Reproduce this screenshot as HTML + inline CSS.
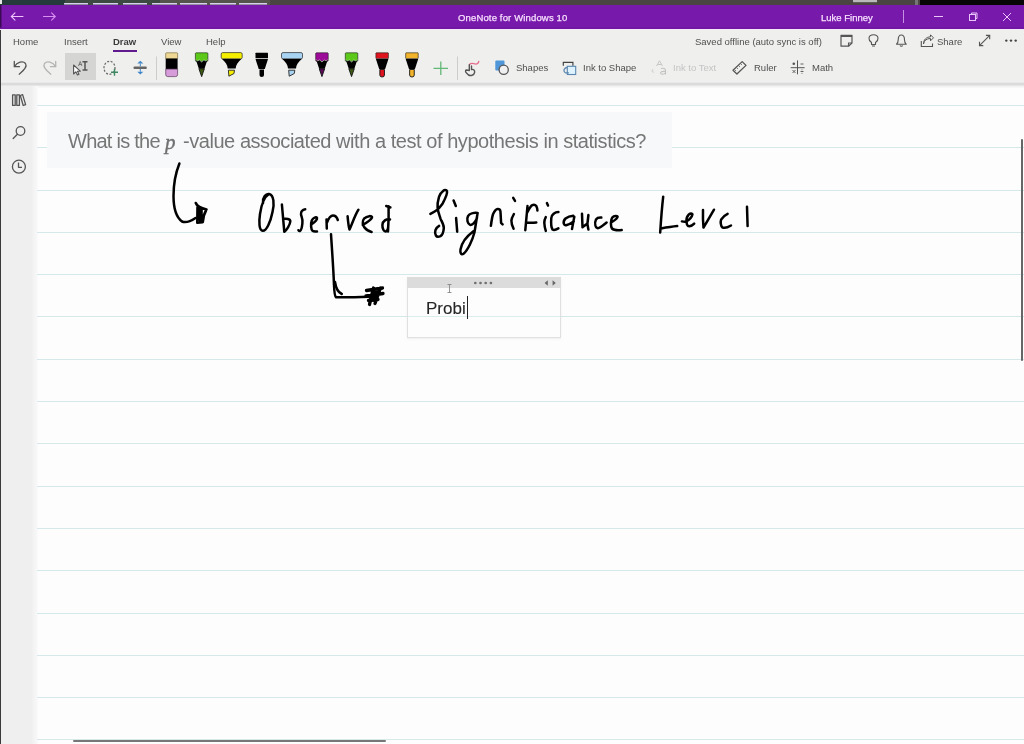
<!DOCTYPE html>
<html><head><meta charset="utf-8">
<style>
*{margin:0;padding:0;box-sizing:border-box}
html,body{width:1024px;height:744px;overflow:hidden;background:#fdfdfd;font-family:"Liberation Sans",sans-serif}
.abs{position:absolute}
#top{left:0;top:0;width:1024px;height:5px;background:#3e4442}
#title{left:0;top:5px;width:1024px;height:24px;background:#7719aa}
#ribbon{left:0;top:29px;width:1024px;height:52px;background:#efefee}
#shadow{left:0;top:81px;width:1024px;height:7px;background:linear-gradient(#f2f2f2 0px,#e9e9e9 1.5px,#dadada 2.5px,#dbdbdb 3.5px,#e6e6e6 4.5px,#f2f2f2 5.5px,#fafafa 7px)}
#side{left:0;top:86px;width:38px;height:658px;background:linear-gradient(90deg,#efefef 32px,#f3f3f3 33px,#f6f6f6 36px,#fbfbfb 38px)}
#leftedge{left:0;top:29px;width:1px;height:715px;background:#3a3a3a}
.t{position:absolute;white-space:nowrap;line-height:1;will-change:transform}
.rl{position:absolute;left:37px;width:987px;height:1px;background:#d5e9ea}
</style></head><body>
<div id="top" class="abs"></div>
<div id="title" class="abs"></div>
<div id="ribbon" class="abs"></div>
<div id="shadow" class="abs"></div>
<div id="side" class="abs"></div>
<div id="leftedge" class="abs"></div>


<svg class="abs" style="left:0;top:0" width="1024" height="90" viewBox="0 0 1024 90">
<!-- top strip details -->
<rect x="0" y="0" width="65" height="5" fill="#253a3a"/>
<rect x="65" y="0" width="95" height="5" fill="#3c4a42"/>
<rect x="160" y="0" width="110" height="5" fill="#55544c"/>
<rect x="270" y="0" width="650" height="5" fill="#4a4542"/>
<rect x="920" y="0" width="104" height="5" fill="#060606"/>
<rect x="0" y="0" width="2" height="4" fill="#e8e8e8"/>
<rect x="853" y="0" width="24" height="2.2" fill="#cfcfcf" opacity="0.85"/><rect x="915" y="0" width="3" height="5" fill="#777"/>
<g fill="#d8d0f0"><rect x="64" y="3" width="24" height="1.5"/><rect x="93" y="3" width="25" height="1.5"/><rect x="123" y="3" width="24" height="1.5"/><rect x="152" y="3" width="25" height="1.5"/><rect x="180" y="3" width="27" height="1.5"/><rect x="210" y="3" width="26" height="1.5"/><rect x="239" y="3" width="28" height="1.5"/></g>
<rect x="0" y="5" width="1.5" height="24" fill="#3a0a55"/><rect x="0" y="27.5" width="1024" height="1.5" fill="#6e17a0"/>
<!-- back/forward -->
<g fill="none" stroke="#f0c4ff" stroke-width="1.1" stroke-linecap="round">
<path d="M11.5 16.5H23M15 12.8L11.3 16.5L15 20.2"/>
</g>
<g fill="none" stroke="#d890f2" stroke-width="1.1" stroke-linecap="round">
<path d="M43.5 16.5H55.3M51.6 12.8L55.3 16.5L51.6 20.2"/>
</g>
<rect x="903" y="10" width="1" height="13" fill="#c590e0"/>
<g fill="none" stroke="#eac4fa" stroke-width="1">
<path d="M934 16.5H943"/>
<rect x="969.5" y="14.5" width="6" height="6"/>
<path d="M971.5 14.5V13H977V18.5H975.5"/>
<path d="M1003 13L1011 21M1011 13L1003 21"/>
</g>
<rect x="0" y="29" width="1024" height="1" fill="#f6e8fb"/>
<!-- undo / redo -->
<g fill="none" stroke="#555" stroke-width="1.3" stroke-linecap="round" stroke-linejoin="round">
<path d="M14.5 66.5C17 62 23 60.5 25.5 63.5C27.5 66.5 24.5 70 19.2 74.2"/>
<path d="M14.3 61.5V66.7H19.5"/>
</g>
<g fill="none" stroke="#b4b4b4" stroke-width="1.3" stroke-linecap="round" stroke-linejoin="round">
<path d="M55.5 66.5C53 62 47 60.5 44.5 63.5C42.5 66.5 45.5 70 50.8 74.2"/>
<path d="M55.7 61.5V66.7H50.5"/>
</g>
<!-- lasso select selected -->
<rect x="65" y="53" width="31" height="27" fill="#d5d5d3"/>
<path d="M73.6 65V74L75.8 71.8L77.5 75L79 74.3L77.4 71.2L80.3 71.2Z" fill="#fff" stroke="#555" stroke-width="1.1" stroke-linejoin="round"/>
<path d="M78.5 66L80.2 61.5L82 66M79 64.5H81.5" fill="none" stroke="#666" stroke-width="0.8"/>
<path d="M82.5 61.8H87.5M85 61.8V70M82.5 70H87.5" fill="none" stroke="#555" stroke-width="1.5"/>
<!-- lasso circle -->
<ellipse cx="109.5" cy="67.8" rx="5.5" ry="6.5" fill="none" stroke="#666" stroke-width="1.2" stroke-dasharray="2 1.6"/>
<path d="M111 72.3H118M114.5 68.8V75.8" stroke="#3f8a60" stroke-width="1.4"/>
<!-- space tool -->
<rect x="133.5" y="66.4" width="13.3" height="2.6" rx="1" fill="#666"/>
<path d="M140.3 60.8L137.3 63.6H143.3Z M140.3 74.6L137.3 71.7H143.3Z" fill="#3f86c8"/>
<path d="M140.3 63.5V66.4M140.3 69V71.8" stroke="#3f86c8" stroke-width="1"/>
<rect x="156" y="56.5" width="1" height="23.5" fill="#cdcdcd"/>
<!-- plus and sep -->
<path d="M433.5 68.3H448M440.8 61.5V75" stroke="#62b876" stroke-width="1.3"/>
<rect x="457" y="56.5" width="1" height="23.5" fill="#cdcdcd"/>
<!-- ink replay -->
<path d="M469.5 64.5C471 62.5 474 63.5 475.5 64C477 64.3 478.5 63 478.8 61.5" fill="none" stroke="#e86c8c" stroke-width="1.3" stroke-linecap="round"/>
<path d="M469.3 64.8V70.5L466.3 70C465 70.5 465.5 72 466.5 73L468.5 75C470.5 76 474 75.5 474.6 72.5C475 70.5 473.5 69 471.5 69.5V66" fill="none" stroke="#555" stroke-width="1.4" stroke-linejoin="round" stroke-linecap="round"/>
<!-- shapes -->
<rect x="495.3" y="60.6" width="9.2" height="10" rx="1" fill="#4f97d8"/>
<circle cx="503.7" cy="69.8" r="4.6" fill="#f0f0f0" stroke="#555" stroke-width="1.3"/>
<!-- ink to shape -->
<path d="M563.3 65.8V62.3H572.9V65.8" fill="none" stroke="#444" stroke-width="1.2"/>
<rect x="567.3" y="66.3" width="8.4" height="8.2" fill="#dff3ff" stroke="#5a86b0" stroke-width="1.1"/>
<path d="M567 67.5C564.5 68 562.5 70.5 565 72.5C566.5 73.5 568 72.5 569 73" fill="none" stroke="#5a86b0" stroke-width="1.3"/>
<!-- ink to text disabled -->
<path d="M656.5 66L659.5 60.8L662.5 66M657.5 64.5H661.5" fill="none" stroke="#c6c6c6" stroke-width="1"/>
<path d="M653 69C651.5 70.5 652 73 654 72" fill="none" stroke="#cdcdcd" stroke-width="1"/>
<path d="M661 68.5C665 67.5 665.5 69.5 665.5 71V74.5M665.3 71.5C662 71 660 72 660.8 73.5C661.5 74.5 664 74.5 665.3 73" fill="none" stroke="#c2c2c2" stroke-width="1.1"/>
<!-- ruler -->
<path d="M742.2 61.6L746 65.4L736.9 74L733 70.3Z" fill="none" stroke="#555" stroke-width="1.3" stroke-linejoin="round"/>
<path d="M740.5 63.5L742 65M738.5 65.5L740 67M736.5 67.5L738 69M734.5 69.5L736 71" stroke="#666" stroke-width="0.8"/>
<!-- math -->
<path d="M797.5 60.4V74.3M790.7 67.7H804.6" stroke="#555" stroke-width="1"/>
<circle cx="793.8" cy="63.8" r="1.3" fill="#555"/>
<path d="M800.5 64H803.5M792.5 70L795.5 73M795.5 70L792.5 73M800.5 71.5H803.5" stroke="#555" stroke-width="0.9"/>
<circle cx="802" cy="69.8" r="0.5" fill="#555"/><circle cx="802" cy="73.3" r="0.5" fill="#555"/>
<!-- row2 right icons -->
<path d="M841 35.3H852V43L848.5 46.2H841Z" fill="none" stroke="#555" stroke-width="1.2" stroke-linejoin="round"/>
<path d="M841 36H852" stroke="#555" stroke-width="2"/>
<path d="M852 43H848.5V46.2" fill="none" stroke="#555" stroke-width="1.1"/>
<path d="M871.5 42.5C869.5 41 868.8 39.5 869 38C869.3 35.8 871.2 34.8 873.5 34.8C875.8 34.8 877.7 35.8 878 38C878.2 39.5 877.5 41 875.5 42.5V44.5H871.5Z M872 46H875" fill="none" stroke="#555" stroke-width="1.1" stroke-linejoin="round"/>
<path d="M896.5 44.2H906.2C905 43 904.5 42 904.5 40C904.5 36.5 903 35 901.3 35C899.6 35 898.2 36.5 898.2 40C898.2 42 897.7 43 896.5 44.2Z M900 45.5C900.5 46.5 902.2 46.5 902.7 45.5" fill="none" stroke="#555" stroke-width="1.1" stroke-linejoin="round"/>
<path d="M921.3 41V46.5H932.5V43.5" fill="none" stroke="#555" stroke-width="1.1"/>
<path d="M923.5 44C924 40.5 926.5 38.5 930.5 38.5V40.8L933.5 37.8L930.5 34.8V36.8C926 37 923.5 40 923.5 44Z" fill="none" stroke="#555" stroke-width="1" stroke-linejoin="round"/>
<path d="M979.5 45.6L989.7 35.4M979.5 41.8V45.6H983.3M985.9 35.4H989.7V39.2" fill="none" stroke="#555" stroke-width="1.1"/>
<g fill="#444"><circle cx="1006.3" cy="40.6" r="1.2"/><circle cx="1011" cy="40.6" r="1.2"/><circle cx="1015.7" cy="40.6" r="1.2"/></g>
</svg>

<!-- pens -->
<svg class="abs" style="left:0;top:0" width="1024" height="90" viewBox="0 0 1024 90"><path d="M165.7 53.5 Q165.7 52.8 166.39999999999998 52.8 H176.9 Q177.6 52.8 177.6 53.5 V58.6 H165.7 Z" fill="#efd893" stroke="#6a5a30" stroke-width="0.6"/><rect x="165.7" y="58.6" width="11.9" height="10.5" fill="#000"/><path d="M165.7 69.1 H177.6 V74.5 Q177.6 76.6 175.6 76.6 H167.7 Q165.7 76.6 165.7 74.5 Z" fill="#d69bd9" stroke="#5a3a5a" stroke-width="0.7"/><rect x="195.4" y="52.8" width="12.5" height="8.5" rx="0.8" fill="#5cc81a" stroke="#1a1a1a" stroke-width="0.6"/><path d="M195.70 59.30 L197.40 61.00 L199.40 59.90 L201.65 62.00 L203.90 59.90 L205.90 61.00 L207.60 59.30 L204.45 68.80 L198.85 68.80 Z" fill="#000"/><path d="M195.70 59.30 L197.40 61.00 L199.40 59.90 L201.65 62.00 L203.90 59.90 L205.90 61.00 L207.60 59.30" fill="none" stroke="#d8f0c8" stroke-width="0.7" opacity="0.8"/><path d="M198.95000000000002 68.8 L204.35 68.8 L201.65 76.6 Z" fill="#3d5a12" stroke="#111" stroke-width="0.9" stroke-linejoin="round"/><rect x="221.2" y="52.6" width="21" height="6.2" rx="1.5" fill="#f5ee00" stroke="#222" stroke-width="0.7"/><path d="M222.0 59 H241.39999999999998 C238.2 62 235.7 65 235.7 68.6 H227.7 C227.7 65 225.2 62 222.0 59 Z" fill="#000"/><path d="M228.39999999999998 70.2 H234.5 L234.0 73.5 L228.89999999999998 76.2 Z" fill="#f5ee00" stroke="#222" stroke-width="0.9" stroke-linejoin="round"/><rect x="255.5" y="52.8" width="12.5" height="5.4" rx="0.5" fill="#000"/><path d="M255.5 59 H268 L264.8 69 H258.7 Z" fill="#000"/><path d="M259.5 69.6 H264 V75 Q264 77 261.75 77 Q259.5 77 259.5 75 Z" fill="#000"/><rect x="281.5" y="52.6" width="21" height="6.2" rx="1.5" fill="#a9d3f3" stroke="#222" stroke-width="0.7"/><path d="M282.3 59 H301.7 C298.5 62 296.0 65 296.0 68.6 H288.0 C288.0 65 285.5 62 282.3 59 Z" fill="#000"/><path d="M288.7 70.2 H294.8 L294.3 73.5 L289.2 76.2 Z" fill="#a9d3f3" stroke="#222" stroke-width="0.9" stroke-linejoin="round"/><rect x="315.7" y="52.8" width="12.5" height="8.5" rx="0.8" fill="#9c0c98" stroke="#1a1a1a" stroke-width="0.6"/><path d="M316.00 59.30 L317.70 61.00 L319.70 59.90 L321.95 62.00 L324.20 59.90 L326.20 61.00 L327.90 59.30 L324.75 68.80 L319.15 68.80 Z" fill="#000"/><path d="M316.00 59.30 L317.70 61.00 L319.70 59.90 L321.95 62.00 L324.20 59.90 L326.20 61.00 L327.90 59.30" fill="none" stroke="#d8f0c8" stroke-width="0.7" opacity="0.8"/><path d="M319.25 68.8 L324.65 68.8 L321.95 76.6 Z" fill="#5a0a58" stroke="#111" stroke-width="0.9" stroke-linejoin="round"/><rect x="345.3" y="52.8" width="12.5" height="8.5" rx="0.8" fill="#5cc81a" stroke="#1a1a1a" stroke-width="0.6"/><path d="M345.60 59.30 L347.30 61.00 L349.30 59.90 L351.55 62.00 L353.80 59.90 L355.80 61.00 L357.50 59.30 L354.35 68.80 L348.75 68.80 Z" fill="#000"/><path d="M345.60 59.30 L347.30 61.00 L349.30 59.90 L351.55 62.00 L353.80 59.90 L355.80 61.00 L357.50 59.30" fill="none" stroke="#d8f0c8" stroke-width="0.7" opacity="0.8"/><path d="M348.85 68.8 L354.25 68.8 L351.55 76.6 Z" fill="#3d5a12" stroke="#111" stroke-width="0.9" stroke-linejoin="round"/><rect x="375.9" y="52.8" width="12.5" height="5.8" rx="0.5" fill="#e0141e" stroke="#1a1a1a" stroke-width="0.6"/><path d="M375.9 59 H388.4 L385.15 69 H379.15 Z" fill="#000"/><path d="M379.84999999999997 69.5 H384.45 V75 Q384.45 77 382.15 77 Q379.84999999999997 77 379.84999999999997 75 Z" fill="#e0141e" stroke="#111" stroke-width="0.9"/><rect x="405.7" y="52.8" width="12.5" height="5.8" rx="0.5" fill="#f2b42a" stroke="#1a1a1a" stroke-width="0.6"/><path d="M405.7 59 H418.2 L414.95 69 H408.95 Z" fill="#000"/><path d="M409.65 69.5 H414.25 V75 Q414.25 77 411.95 77 Q409.65 77 409.65 75 Z" fill="#f2b42a" stroke="#111" stroke-width="0.9"/></svg>
<!-- ruled lines -->
<div class="rl" style="top:105px"></div>
<div class="rl" style="top:147px"></div>
<div class="rl" style="top:190px"></div>
<div class="rl" style="top:232px"></div>
<div class="rl" style="top:274px"></div>
<div class="rl" style="top:316px"></div>
<div class="rl" style="top:359px"></div>
<div class="rl" style="top:401px"></div>
<div class="rl" style="top:443px"></div>
<div class="rl" style="top:486px"></div>
<div class="rl" style="top:528px"></div>
<div class="rl" style="top:570px"></div>
<div class="rl" style="top:613px"></div>
<div class="rl" style="top:655px"></div>
<div class="rl" style="top:697px"></div>
<div class="rl" style="top:739px"></div>

<!-- question box -->
<div class="abs" style="left:47px;top:112px;width:625px;height:56px;background:#f7f8fa"></div>
<div class="t" style="left:68px;top:131px;font-size:20px;color:#767676;letter-spacing:-0.75px">What is the</div>
<div class="t" style="left:165px;top:132px;font-size:21px;color:#707070;font-family:'Liberation Serif';font-style:italic;-webkit-text-stroke:0.4px #707070">p</div>
<div class="t" style="left:183px;top:131px;font-size:20px;color:#767676;letter-spacing:-0.45px">-value associated with a test of hypothesis in statistics?</div>


<!-- sidebar icons -->
<svg class="abs" style="left:0;top:86px" width="40" height="100" viewBox="0 86 40 100">
<g fill="none" stroke="#555" stroke-width="1.3" stroke-linejoin="round">
<rect x="12.6" y="94.8" width="2.6" height="10.6"/>
<rect x="16.8" y="94.8" width="2.6" height="10.6"/>
<path d="M20.3 95.5L22.6 94.6L25.6 104.6L23.2 105.5Z"/>
<circle cx="20.5" cy="131" r="4.3"/>
<path d="M17.4 134.2L13.2 138.5" stroke-linecap="round"/>
<circle cx="18.9" cy="166.7" r="6.5"/>
<path d="M18.5 162.5V167.3H22"/>
</g>
</svg>
<!-- scrollbars -->
<div class="abs" style="left:1021px;top:139px;width:2px;height:222px;background:#666;border-radius:1px"></div>
<div class="abs" style="left:73px;top:740px;width:313px;height:2px;background:#777;border-radius:1px"></div>
<!-- text box -->
<div class="abs" style="left:407px;top:277px;width:154px;height:61px;border:1px solid #e0e0e0;background:rgba(255,255,255,0.2);box-shadow:0 1px 2px rgba(0,0,0,0.06)"></div>
<div class="abs" style="left:407px;top:277px;width:154px;height:11px;background:#dcdcdc"></div>
<svg class="abs" style="left:400px;top:270px" width="170" height="60" viewBox="400 270 170 60">
<g fill="#707070"><circle cx="475.3" cy="283" r="1.35"/><circle cx="480.5" cy="283" r="1.35"/><circle cx="485.7" cy="283" r="1.35"/><circle cx="490.9" cy="283" r="1.35"/></g>
<path d="M547.8 280.2V285.8L544.6 283Z M552.6 280.2V285.8L555.8 283Z" fill="#666"/>
<path d="M447.5 284.5H451.5M449.5 284.5V292.5M447.5 292.5H451.5" stroke="#888" stroke-width="0.9"/>
</svg>
<div class="t" style="left:426px;top:300px;font-size:17px;color:#262626;-webkit-text-stroke:0.1px #262626">Probi</div>
<div class="abs" style="left:466.8px;top:296px;width:1.5px;height:23px;background:#222"></div>

<!-- handwriting -->
<svg class="abs" style="left:0;top:0" width="1024" height="744" viewBox="0 0 1024 744">
<g fill="none" stroke="#000" stroke-width="2.5" stroke-linecap="round" stroke-linejoin="round">
<!-- first arrow -->
<path d="M179.4 163.5C176 172 173.5 185 173.5 196C173.5 207 176 217 182 221.5C186.5 223.5 191 221 195.5 218"/>
<path d="M195.8 203C197 206.5 200 208 206.5 209.5M197.5 207.5L197.3 222.8L202.5 222.3M206 210.5C204.5 213 203.3 216 202.8 222M199.5 209L200 221M201.5 210L201.5 220" stroke-width="2.6"/>
<!-- Observed -->
<path d="M263 203C262.5 197 266 193.5 269 194C274 195 274.5 204 272.5 212C270.5 222 266.5 231 262.8 230.8C259 230.5 258.8 222 260 214C261.3 205 264 197 269 194"/>
<path d="M281.9 204.5L284.3 231.8M283 219C286 218.5 290.5 218.5 290.3 221.5C290 225 286.5 230 284.3 231.8"/>
<path d="M305.2 209.3C302.5 209.5 300.5 212 301 214.5C301.5 217 303 219 302.4 223C302 227 301.8 230 300 231C299 231.3 298.5 230.5 298.4 230.2"/>
<path d="M311.3 224.5C313.5 223 317.5 220 317 218C316.5 216.5 313 217.5 311.8 220.5C310.5 224 311 229 312.5 230.8C314 232 316 231.5 317 231.4"/>
<path d="M326.5 219.5L326.8 228.5M327 222.5C328.5 218.5 330.5 215.5 333 215.5C335.5 215.5 337 217.5 337.8 220"/>
<path d="M347.6 216.3C348 221 348.5 226 349.5 229.5C352 224 355.5 214 358.4 209.8"/>
<path d="M362.7 224.8C366 223 371 220 372 217.5C372.5 215.5 367 215.5 364 218.7C362 221 362.5 225 364.6 227.6C366.5 230 369.5 231.5 371.6 231.9"/>
<path d="M388.6 206.2C388.8 214 388.5 224 388 231.4M386.2 206L390.4 207.4M390 219.5C386.5 218.5 382.5 221 382.4 225C382.3 229 384 231.5 385.5 231.4C387 231.3 388 230 388.2 227"/>
<!-- L arrow -->
<path d="M331 234.2C332 250 333.5 270 334 285C334.3 292 334.8 296.5 336 297.3C345 297.5 355 297.3 368.5 296.8"/>
<path d="M335 282C336 289 338.5 292.5 341.8 294"/>
<path d="M366.5 290.5L382.5 288M366 296L383 293.5M373.5 288L369.5 304.5M380.5 288L375 303.5M368.5 300.5L378 299.5" stroke-width="3.3"/><path d="M371 291L380 290L377 301L370 302Z" fill="#000" stroke="none"/>
<!-- Significance -->
<path d="M430.4 213.9C433 212.5 435 211.5 436.9 210C439.5 208 441.5 205 442.7 203.4C445 199 447.5 193 447 191.1C446.5 189.5 444 190 443.4 190.7C441 192.5 439.5 195 439 196.9C437.8 201 437.3 204.5 437.6 207.8C438 212 439.5 215.5 440.5 218.7C442 222 444 225 443.8 228.1C443.5 232 442.5 235 440.5 236.1C438.5 237 436.5 236.5 435.9 235.5C435 233.5 435 231.5 435.4 230.3C436.5 227.5 438 226.5 439.1 225.9"/>
<path d="M453.6 200.5L455.8 206M456.1 217.9L457.2 231.7"/>
<path d="M477.7 213C474 212.5 469.5 213.5 468 216.2C466.5 219 467.5 224 470 224.8C472.5 225.5 475.5 222 477 218M477.5 213.5C476.5 220 475.5 226 474.5 232.3C472.5 240 468 250 463.5 253.8C461 255.5 460 252.5 460.5 249.5C461.5 243 467 236 473.4 231.2"/>
<path d="M490.9 225.8C491.5 221 492.3 216.5 493.1 214C494.5 211 496 209 497.5 208.9C499 208.8 500.2 209.8 500.4 211.1C500.8 215 500.8 219 501.1 222.8L502.6 224.3"/>
<path d="M513.2 197.9L515 200.9M513.9 214C512.5 216.5 511.5 218.5 511.4 220.6C511.3 223.5 512.5 226.5 513.6 228.7"/>
<path d="M527.5 206L525.3 230.2M526.8 213.3C528.5 210 530 207 531.9 205.3C533.5 204.5 535.5 205 536.3 206C537 207.5 537.4 209 537.4 210.4M526 222.5C529.5 222.8 533 222.8 536.3 222.4"/>
<path d="M546.9 203.1L548 205.6M545.8 217C544.8 219 544.2 221 544.3 222.8C544.4 225.5 545 228.5 545.8 230.9"/>
<path d="M558.4 212C555 212 551.5 214.5 551.3 218C551 222 551.5 228 552.5 229.5C554 230.5 556.5 229.5 558.4 228.4"/>
<path d="M573.2 215.8C570.5 216 567.5 217 565.5 218.5C564 220 563.5 222.5 563.8 223.7C564.2 225 565 225.5 566.1 225.2C568.5 224.5 571.5 223 573.7 221.4M574.3 216.7C573.5 221 572.8 225 572 229"/>
<path d="M582 213.8L582.5 227.3C583.5 226.5 585.5 225 587.3 223.5M588.4 215L587.4 224L588.4 229.6"/>
<path d="M601.3 217.6C599.5 217.5 597 218 596 219.5C595 221.5 595 224 595.4 225.5C596 227.5 597.5 228.3 598.4 228.1C601 227.5 604 224.5 606.6 222.6"/>
<path d="M611.1 222.5C613.5 221 617.5 219 617.6 216.8C617.6 215.5 614 215.5 612.3 217.5C610.5 220 610.5 226 612 228.5C614 230.5 618 230.5 621.7 230.1"/>
<!-- Level -->
<path d="M663.2 196.7C662 207 661 220 660.2 232.5M661 228.4C666 227.5 672 226.5 677.2 226"/>
<path d="M681.9 221.4C683.5 221.8 685 221.8 686 221.7C689 220 692 216.5 692.4 214.5C692.5 213 690 213.5 688.9 214.4C687 216.5 686.3 219 686.5 220.8C686.5 223 687 225.5 688.3 226.1C690.5 226.5 693 225 694.2 223.7"/>
<path d="M703 210C702.8 216 703 222 703.5 227.6C707 222 711.5 214 714 209.7"/>
<path d="M727.6 213.8C725 215 722.3 217.5 721.1 219.6C720.3 222 720.8 226 722.3 227.3C724.5 228.5 728.5 227 731 225.5"/>
<path d="M747 206.7C747.2 213 747.4 220 747.6 226"/>
</g>
</svg>

<!-- title text -->
<div class="t" style="left:458px;top:13px;font-size:9.5px;color:#f8e0ff;letter-spacing:0.15px;-webkit-text-stroke:0.25px #f8e0ff">OneNote for Windows 10</div>
<div class="t" style="left:821px;top:13px;font-size:9.5px;color:#f8e0ff;-webkit-text-stroke:0.25px #f8e0ff">Luke Finney</div>

<!-- tabs -->
<div class="t" style="left:13px;top:36.5px;font-size:9.5px;color:#4f4f4f">Home</div>
<div class="t" style="left:64px;top:36.5px;font-size:9.5px;color:#4f4f4f">Insert</div>
<div class="t" style="left:113px;top:36.5px;font-size:9.5px;color:#3c3c3c;font-weight:bold">Draw</div>
<div class="abs" style="left:113px;top:50px;width:24px;height:2px;background:#5f1a8e"></div>
<div class="t" style="left:161px;top:36.5px;font-size:9.5px;color:#4f4f4f">View</div>
<div class="t" style="left:206px;top:36.5px;font-size:9.5px;color:#4f4f4f">Help</div>

<div class="t" style="left:695px;top:36.5px;font-size:9.5px;color:#4f4f4f">Saved offline (auto sync is off)</div>


<div class="t" style="left:516px;top:63px;font-size:9.5px;color:#4f4f4f">Shapes</div>
<div class="t" style="left:583px;top:63px;font-size:9.5px;color:#4f4f4f">Ink to Shape</div>
<div class="t" style="left:673px;top:63px;font-size:9.5px;color:#c4c4c4">Ink to Text</div>
<div class="t" style="left:754px;top:63px;font-size:9.5px;color:#4f4f4f">Ruler</div>
<div class="t" style="left:812px;top:63px;font-size:9.5px;color:#4f4f4f">Math</div>
<div class="t" style="left:937px;top:36.5px;font-size:9.5px;color:#4f4f4f">Share</div>
</body></html>
